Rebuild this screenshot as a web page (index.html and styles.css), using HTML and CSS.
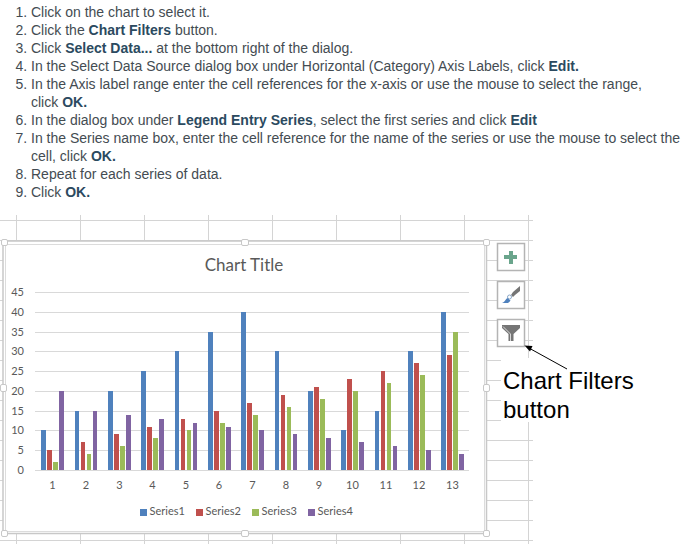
FILE: index.html
```html
<!DOCTYPE html>
<html lang="en">
<head>
    <meta charset="UTF-8">
    <title>Change chart data labels</title>
    <link rel="stylesheet" href="styles.css">
</head>
<body>
    <ol class="steps">
        <li>Click on the chart to select it.</li>
        <li>Click the <strong>Chart Filters</strong> button.</li>
        <li>Click <strong>Select Data...</strong> at the bottom right of the dialog.</li>
        <li>In the Select Data Source dialog box under Horizontal (Category) Axis Labels, click <strong>Edit.</strong></li>
        <li>In the Axis label range enter the cell references for the x-axis or use the mouse to select the range,<br>click <strong>OK.</strong></li>
        <li>In the dialog box under <strong>Legend Entry Series</strong>, select the first series and click <strong>Edit</strong></li>
        <li>In the Series name box, enter the cell reference for the name of the series or use the mouse to select the<br>cell, click <strong>OK.</strong></li>
        <li>Repeat for each series of data.</li>
        <li>Click <strong>OK.</strong></li>
    </ol>

    <svg class="sheet" viewBox="0 210 692 341" width="692" height="341">
        <!-- worksheet cells -->
        <path class="cells" d="M0 220.5H533M0 240.5H533M0 260.5H533M0 280.5H533M0 300.5H533M0 320.5H533M0 340.5H533M0 360.5H533M0 380.5H533M0 400.5H533M0 420.5H533M0 440.5H533M0 460.5H533M0 480.5H533M0 500.5H533M0 520.5H533M0 540.5H533"/>
        <path class="cells" d="M16.5 215V544M80.5 215V544M144.5 215V544M208.5 215V544M272.5 215V544M336.5 215V544M400.5 215V544M464.5 215V544M528.5 215V544"/>
        <rect class="blank" x="501" y="358" width="191" height="64"/>

        <!-- chart frame -->
        <rect class="frame-outer" x="3" y="241" width="483.500" height="292.500"/>
        <rect class="frame-inner" x="5.500" y="244.500" width="479" height="287"/>

        <text class="chart-title" x="244" y="271">Chart Title</text>

        <path class="gridline" d="M35 292.5H469M35 312.5H469M35 332.5H469M35 351.5H469M35 371.5H469M35 391.5H469M35 411.5H469M35 430.5H469M35 450.5H469M35 470.5H469"/>

        <g class="axis-y">
            <text x="24" y="296">45</text>
            <text x="24" y="316">40</text>
            <text x="24" y="336">35</text>
            <text x="24" y="355">30</text>
            <text x="24" y="375">25</text>
            <text x="24" y="395">20</text>
            <text x="24" y="415">15</text>
            <text x="24" y="434">10</text>
            <text x="24" y="454">5</text>
            <text x="24" y="474">0</text>
        </g>

        <g transform="translate(41 470)">
            <rect class="s1" x="0" y="-40" width="5" height="40"/><rect class="s2" x="6" y="-20" width="5" height="20"/><rect class="s3" x="12" y="-8" width="5" height="8"/><rect class="s4" x="18" y="-79" width="5" height="79"/>
        </g>
        <g transform="translate(75 470)">
            <rect class="s1" x="0" y="-59" width="4" height="59"/><rect class="s2" x="6" y="-28" width="4" height="28"/><rect class="s3" x="12" y="-16" width="4" height="16"/><rect class="s4" x="18" y="-59" width="4" height="59"/>
        </g>
        <g transform="translate(108 470)">
            <rect class="s1" x="0" y="-79" width="5" height="79"/><rect class="s2" x="6" y="-36" width="5" height="36"/><rect class="s3" x="12" y="-24" width="5" height="24"/><rect class="s4" x="18" y="-55" width="5" height="55"/>
        </g>
        <g transform="translate(141 470)">
            <rect class="s1" x="0" y="-99" width="5" height="99"/><rect class="s2" x="6" y="-43" width="5" height="43"/><rect class="s3" x="12" y="-32" width="5" height="32"/><rect class="s4" x="18" y="-51" width="5" height="51"/>
        </g>
        <g transform="translate(175 470)">
            <rect class="s1" x="0" y="-119" width="4" height="119"/><rect class="s2" x="6" y="-51" width="4" height="51"/><rect class="s3" x="12" y="-40" width="4" height="40"/><rect class="s4" x="18" y="-47" width="4" height="47"/>
        </g>
        <g transform="translate(208 470)">
            <rect class="s1" x="0" y="-138" width="5" height="138"/><rect class="s2" x="6" y="-59" width="5" height="59"/><rect class="s3" x="12" y="-47" width="5" height="47"/><rect class="s4" x="18" y="-43" width="5" height="43"/>
        </g>
        <g transform="translate(241 470)">
            <rect class="s1" x="0" y="-158" width="5" height="158"/><rect class="s2" x="6" y="-67" width="5" height="67"/><rect class="s3" x="12" y="-55" width="5" height="55"/><rect class="s4" x="18" y="-40" width="5" height="40"/>
        </g>
        <g transform="translate(275 470)">
            <rect class="s1" x="0" y="-119" width="4" height="119"/><rect class="s2" x="6" y="-75" width="4" height="75"/><rect class="s3" x="12" y="-63" width="4" height="63"/><rect class="s4" x="18" y="-36" width="4" height="36"/>
        </g>
        <g transform="translate(308 470)">
            <rect class="s1" x="0" y="-79" width="5" height="79"/><rect class="s2" x="6" y="-83" width="5" height="83"/><rect class="s3" x="12" y="-71" width="5" height="71"/><rect class="s4" x="18" y="-32" width="5" height="32"/>
        </g>
        <g transform="translate(341 470)">
            <rect class="s1" x="0" y="-40" width="5" height="40"/><rect class="s2" x="6" y="-91" width="5" height="91"/><rect class="s3" x="12" y="-79" width="5" height="79"/><rect class="s4" x="18" y="-28" width="5" height="28"/>
        </g>
        <g transform="translate(375 470)">
            <rect class="s1" x="0" y="-59" width="4" height="59"/><rect class="s2" x="6" y="-99" width="4" height="99"/><rect class="s3" x="12" y="-87" width="4" height="87"/><rect class="s4" x="18" y="-24" width="4" height="24"/>
        </g>
        <g transform="translate(408 470)">
            <rect class="s1" x="0" y="-119" width="5" height="119"/><rect class="s2" x="6" y="-107" width="5" height="107"/><rect class="s3" x="12" y="-95" width="5" height="95"/><rect class="s4" x="18" y="-20" width="5" height="20"/>
        </g>
        <g transform="translate(441 470)">
            <rect class="s1" x="0" y="-158" width="5" height="158"/><rect class="s2" x="6" y="-115" width="5" height="115"/><rect class="s3" x="12" y="-138" width="5" height="138"/><rect class="s4" x="18" y="-16" width="5" height="16"/>
        </g>

        <g class="axis-x">
            <text x="52.5" y="489">1</text>
            <text x="86" y="489">2</text>
            <text x="119.5" y="489">3</text>
            <text x="152.5" y="489">4</text>
            <text x="186" y="489">5</text>
            <text x="219" y="489">6</text>
            <text x="252.5" y="489">7</text>
            <text x="286" y="489">8</text>
            <text x="319" y="489">9</text>
            <text x="352.5" y="489">10</text>
            <text x="386" y="489">11</text>
            <text x="419" y="489">12</text>
            <text x="452.5" y="489">13</text>
        </g>

        <g class="legend">
            <rect class="s1" x="140" y="509" width="7" height="7"/><text x="149.5" y="515">Series1</text>
            <rect class="s2" x="196" y="509" width="7" height="7"/><text x="205.5" y="515">Series2</text>
            <rect class="s3" x="252" y="509" width="7" height="7"/><text x="261.5" y="515">Series3</text>
            <rect class="s4" x="308" y="509" width="7" height="7"/><text x="317.5" y="515">Series4</text>
        </g>

        <!-- resize handles -->
        <rect class="handle" x="1.5" y="239.5" width="6" height="6" rx="1.5"/>
        <rect class="handle" x="241.5" y="239.5" width="7" height="6" rx="1.5"/>
        <rect class="handle" x="483.5" y="239.5" width="6" height="6" rx="1.5"/>
        <rect class="handle" x="0.5" y="384.5" width="6" height="7" rx="1.5"/>
        <rect class="handle" x="483.5" y="384.5" width="6" height="7" rx="1.5"/>
        <rect class="handle" x="1.5" y="530.5" width="6" height="6" rx="1.5"/>
        <rect class="handle" x="241.5" y="530.5" width="7" height="6" rx="1.5"/>
        <rect class="handle" x="483.5" y="530.5" width="6" height="6" rx="1.5"/>

        <!-- side buttons -->
        <rect class="side-btn" x="497.5" y="243.5" width="27" height="27"/>
        <path class="icon-plus" d="M509 251h4v4h4v4h-4v5h-4v-5h-5v-4h5z"/>

        <rect class="side-btn" x="497.5" y="281.5" width="27" height="27"/>
        <path class="icon-grey" d="M520 286v5l-5 4-2 2-2-2 2-3z"/>
        <circle class="icon-ring" cx="509.500" cy="297" r="2"/>
        <path class="icon-blue" d="M502 303c3-1 3.500-4 5.500-5l3 2.500c-1 1.500-2 2.500-3.500 2.500z"/>

        <rect class="side-btn" x="497.5" y="319.5" width="27" height="27"/>
        <path class="icon-grey" d="M502 325h18v3l-6.500 6v7h-5v-7l-6.500-6z"/>
        <path class="icon-light" d="M503 326.500l7.500 7.500v7"/>

        <!-- callout -->
        <path class="arrow-line" d="M567 369L528 347.500"/>
        <path class="arrow-head" d="M524.500 345.500L532.500 346L530 351.500z"/>
        <text class="callout" x="503" y="389">Chart Filters</text>
        <text class="callout" x="503" y="418">button</text>
    </svg>
</body>
</html>
```

FILE: styles.css
```css
body {
    margin: 0;
    background: #fff;
    font-family: "Liberation Sans", Arial, sans-serif;
    overflow: hidden;
}
.steps {
    margin: 0;
    padding: 3px 0 9px 31px;
    font-size: 14px;
    line-height: 18px;
    color: #444c52;
    height: 198px;
}
.steps strong {
    color: #2b4a60;
}
.sheet {
    display: block;
}
.cells {
    fill: none;
    stroke: #d4d4d4;
}
.blank {
    fill: #fff;
}
.frame-outer {
    fill: #fff;
    stroke: #c8c8c8;
    stroke-width: 1.5;
}
.frame-inner {
    fill: #fff;
    stroke: #dcdcdc;
}
.gridline {
    fill: none;
    stroke: #d9d9d9;
}
.chart-title {
    font-family: Lato, sans-serif;
    font-size: 17px;
    fill: #595959;
    text-anchor: middle;
}
.axis-y text,
.axis-x text,
.legend text {
    font-family: Lato, sans-serif;
    font-size: 11px;
    fill: #595959;
}
.axis-y text {
    text-anchor: end;
}
.axis-x text {
    text-anchor: middle;
}
.s1 { fill: #4f81bd; }
.s2 { fill: #c0504d; }
.s3 { fill: #9bbb59; }
.s4 { fill: #8064a2; }
.handle {
    fill: #fff;
    stroke: #c8c8c8;
}
.side-btn {
    fill: #fff;
    stroke: #b4b4b4;
    stroke-width: 1.5;
}
.icon-plus {
    fill: #6aa58c;
}
.icon-grey {
    fill: #757575;
}
.icon-blue {
    fill: #4f81bd;
}
.icon-ring {
    fill: #fff;
    stroke: #8aa7c7;
}
.icon-light {
    fill: none;
    stroke: #d8d8d8;
}
.arrow-line {
    fill: none;
    stroke: #000;
}
.arrow-head {
    fill: #000;
}
.callout {
    font-size: 24px;
    fill: #000;
}
```
